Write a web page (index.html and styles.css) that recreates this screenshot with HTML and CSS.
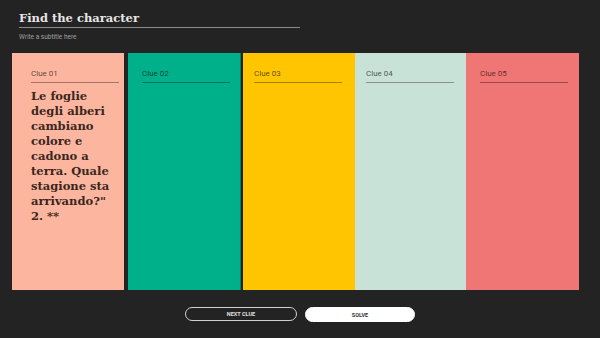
FILE: index.html
```html
<!DOCTYPE html>
<html lang="en">
<head>
  <meta charset="UTF-8" />
  <title>Find the character</title>
  <link rel="stylesheet" href="styles.css">
</head>
<body>
  <div class="page">
    <div class="head">
      <h1 class="title">Find the character</h1>
      <p class="subtitle">Write a subtitle here</p>
    </div>

    <div class="clues">
      <div class="clue clue-1">
        <div class="inner">
          <div class="label">Clue 01</div>
          <p class="text">Le foglie degli alberi cambiano colore e cadono a terra. Quale stagione sta arrivando?"<br>2. **</p>
        </div>
      </div>
      <div class="clue clue-2">
        <div class="inner"><div class="label">Clue 02</div></div>
      </div>
      <div class="clue clue-3">
        <div class="inner"><div class="label">Clue 03</div></div>
      </div>
      <div class="clue clue-4">
        <div class="inner"><div class="label">Clue 04</div></div>
      </div>
      <div class="clue clue-5">
        <div class="inner"><div class="label">Clue 05</div></div>
      </div>
    </div>

    <div class="actions">
      <button class="btn btn-outline">NEXT CLUE</button>
      <button class="btn btn-solid">SOLVE</button>
    </div>
  </div>
</body>
</html>
```

FILE: styles.css
```css
body {
  margin: 0;
  background: #232323;
  font-family: Roboto, sans-serif;
  color: #fff;
}

.page {
  width: 600px;
  height: 338px;
  overflow: hidden;
}

.head {
  padding: 11px 0 0 19px;
  width: 281px;
}

.title {
  margin: 0;
  font-family: "DejaVu Serif", serif;
  font-size: 11.5px;
  font-weight: bold;
  color: #e6e6e6;
  line-height: 15px;
  padding-bottom: 1px;
  border-bottom: 1px solid #8a8a8a;
}

.subtitle {
  margin: 5px 0 0;
  font-size: 6.5px;
  line-height: 8px;
  color: #a0a0a0;
}

.clues {
  display: flex;
  margin: 12px 0 0 12px;
  height: 237px;
}

.clue {
  width: 112px;
  height: 100%;
}

.clue-1 { background: #fcb69f; }
.clue-2 { background: #00b08a; margin-left: 4px; width: 113px; box-shadow: inset -1px 0 0 #0b7d62; }
.clue-3 { background: #ffc600; margin-left: 2px; }
.clue-4 { background: #c8e2d8; width: 111px; }
.clue-5 { background: #f07575; width: 113px; }

.inner {
  width: 88px;
  padding-top: 16px;
}

.clue-1 .inner { margin-left: 19px; }
.clue-2 .inner { margin-left: 14px; }
.clue-3 .inner { margin-left: 11px; }
.clue-4 .inner { margin-left: 11px; }
.clue-5 .inner { margin-left: 14px; }

.label {
  font-size: 8px;
  color: rgba(0, 0, 0, 0.65);
  line-height: 10px;
  padding-bottom: 3px;
  border-bottom: 1px solid rgba(0, 0, 0, 0.35);
}

.text {
  margin: 6px 0 0;
  font-family: "DejaVu Serif", serif;
  font-weight: bold;
  font-size: 11.5px;
  line-height: 15px;
  color: #3a2620;
}

.actions {
  display: flex;
  justify-content: center;
  gap: 8px;
  margin-top: 17px;
}

.btn {
  width: 112px;
  height: 14px;
  border-radius: 8px;
  font-family: Roboto, sans-serif;
  font-size: 5.5px;
  font-weight: bold;
  padding: 0;
}

.btn-outline {
  background: transparent;
  border: 1px solid #d0d0d0;
  color: #e0e0e0;
}

.btn-solid {
  background: #fff;
  border: 1px solid #fff;
  color: #333;
  width: 110px;
  height: 15px;
}
```
